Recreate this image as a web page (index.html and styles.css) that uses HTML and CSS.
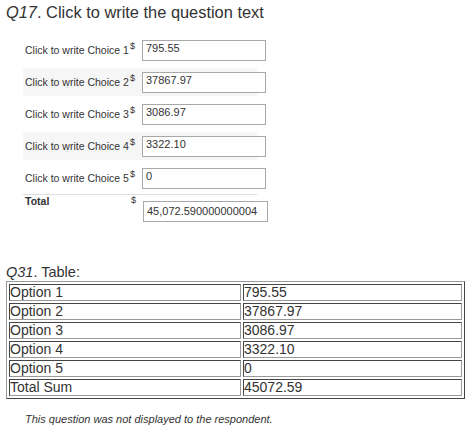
FILE: index.html
```html
<html>
<head>
<title>Q17 - Q31</title>
<link rel="stylesheet" href="styles.css">
</head>
<body>
<div class="page">

<!-- Q17 constant sum -->
<div class="question">
<div class="qtext"><i>Q17</i>. Click to write the question text</div>
<div class="choices">
<div class="choice"><span class="label">Click to write Choice 1<sup>$</sup></span><input class="box" type="text" value="795.55"></div>
<div class="choice alt"><span class="label">Click to write Choice 2<sup>$</sup></span><input class="box" type="text" value="37867.97"></div>
<div class="choice"><span class="label">Click to write Choice 3<sup>$</sup></span><input class="box" type="text" value="3086.97"></div>
<div class="choice alt"><span class="label">Click to write Choice 4<sup>$</sup></span><input class="box" type="text" value="3322.10"></div>
<div class="choice"><span class="label">Click to write Choice 5<sup>$</sup></span><input class="box" type="text" value="0"></div>
<div class="total"><span class="label"><b>Total</b><span class="cur">$</span></span><input class="box sum" type="text" value="45,072.590000000004"></div>
</div>
</div>

<!-- Q31 piped table -->
<div class="question q31">
<div class="qtext small"><i>Q31</i>. Table:</div>
<table class="grid">
<tr><td class="name">Option 1</td><td>795.55</td></tr>
<tr><td class="name">Option 2</td><td>37867.97</td></tr>
<tr><td class="name">Option 3</td><td>3086.97</td></tr>
<tr><td class="name">Option 4</td><td>3322.10</td></tr>
<tr><td class="name">Option 5</td><td>0</td></tr>
<tr><td class="name">Total Sum</td><td>45072.59</td></tr>
</table>
<p class="note">This question was not displayed to the respondent.</p>
</div>

</div>
</body>
</html>
```

FILE: styles.css
```css
body { margin:0; background:#fff; color:#333; font-family:"Liberation Sans", Arial, sans-serif; }
.page { padding:3px 6px 0; }

.qtext { font-size:16.4px; line-height:19px; color:#333; }
.qtext.small { font-size:14.5px; line-height:16px; }

.choices { margin:14px 0 0 17px; width:234px; }
.choice { display:grid; grid-template-columns:119px 124px; align-items:center; height:28px; margin-bottom:4px; }
.choice.alt { background:#f6f6f6; }
.label { font-size:10.5px; line-height:13px; padding-left:2px; color:#333; }
.label sup { font-size:9px; line-height:0; vertical-align:5px; margin-left:1px; }

.box { width:124px; height:21px; box-sizing:border-box; margin:0; padding:0 3px 4px;
  border:1px solid #a8a8a8; font-family:"Liberation Sans", Arial, sans-serif; font-size:11px; color:#333; background:#fff; }

.total { display:grid; grid-template-columns:119px 124px; align-items:start; margin-top:-2px; border-top:1px solid #dedede; }
.total .label { display:flex; justify-content:space-between; padding-right:6px; }
.total .cur { font-size:9px; line-height:9px; margin-top:1px; }
.box.sum { margin:6px 0 0 1px; padding:0 3px 1px; width:125px; }

.q31 { margin-top:42px; }
table.grid { margin-top:1px; border:1px outset #999; border-spacing:2px; width:459px; table-layout:fixed; }
table.grid td { border:1px inset #999; padding:0; font-size:14px; line-height:15px; color:#333; }
table.grid td.name { width:230px; }

.note { margin:14px 0 0 19px; font-size:11px; line-height:13px; font-style:italic; color:#333; }
```
